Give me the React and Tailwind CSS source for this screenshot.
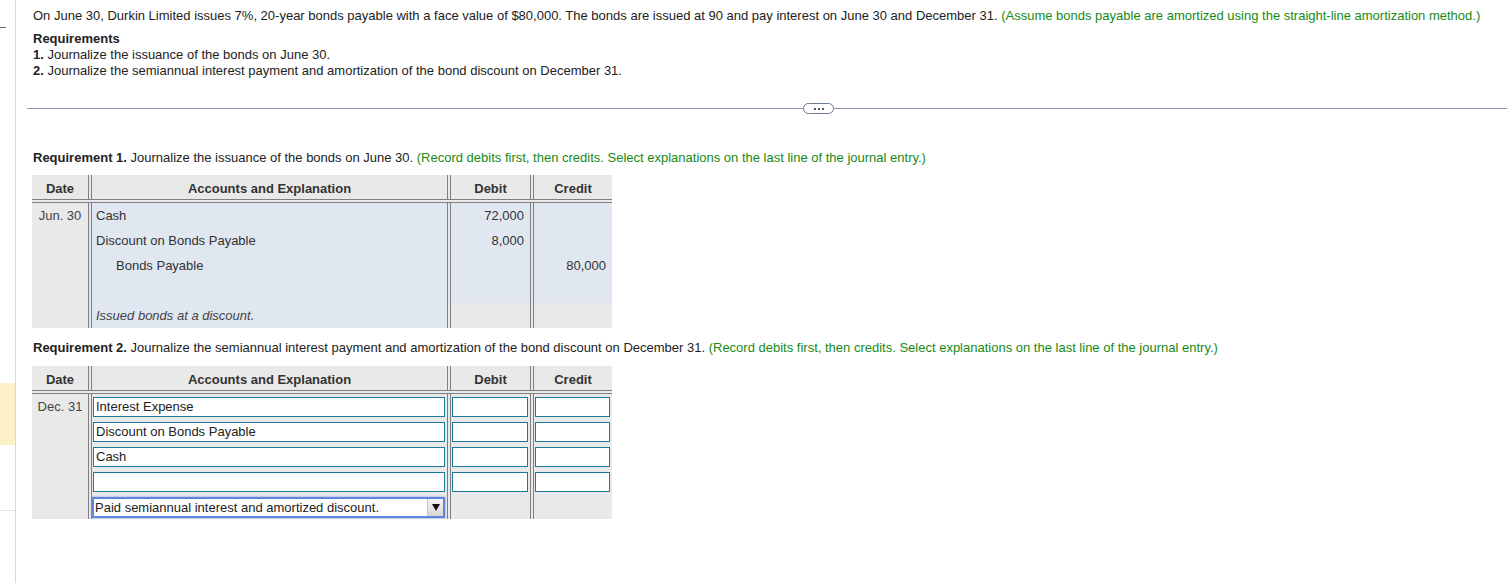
import React from 'react';

const COLS = 'grid grid-cols-[56px_359px_83px_82px]';
const SEP = 'border-l-4 border-double border-[#808080]';

const HeaderRow = () => (
    <div className={`${COLS} h-[28px] bg-[#e9e9e9] border-b-4 border-double border-[#808080] font-bold text-[#333]`}>
        <div className="flex items-center justify-center pt-[3px]">Date</div>
        <div className={`${SEP} flex items-center justify-center pt-[4px]`}>Accounts and Explanation</div>
        <div className={`${SEP} flex items-center justify-center pt-[4px]`}>Debit</div>
        <div className={`${SEP} flex items-center justify-center pt-[4px]`}>Credit</div>
    </div>
);

// static journal row, requirement 1
const EntryRow = ({ date, account, debit, credit, indent, last, italic }) => (
    <div className={`${COLS} h-[25px]`}>
        <div className="flex items-center justify-center bg-[#e9e9e9] text-[#444]">{date}</div>
        <div className={`${SEP} flex items-center bg-[#e0e7f1] text-[#333] ${indent ? 'pl-[24px]' : 'pl-[4px]'} ${italic ? 'italic text-[#444]' : ''}`}>
            {account}
        </div>
        <div className={`${SEP} flex items-center justify-end pr-[6px] text-[#333] ${last ? 'bg-[#e9e9e9]' : 'bg-[#e0e7f1]'}`}>{debit}</div>
        <div className={`${SEP} flex items-center justify-end pr-[6px] text-[#333] ${last ? 'bg-[#e9e9e9]' : 'bg-[#e0e7f1]'}`}>{credit}</div>
    </div>
);

const Box = ({ value, className = '' }) => (
    <div className={`h-[20px] bg-white border border-[#1a7b99] flex items-center pl-[2px] text-[#222] ${className}`}>{value}</div>
);

// input row, requirement 2
const InputRow = ({ date, account }) => (
    <div className={`${COLS} h-[25px] bg-[#e9e9e9]`}>
        <div className="flex items-center justify-center text-[#444]">{date}</div>
        <div className={`${SEP} flex items-center pl-[1px] pr-[2px]`}>
            <Box value={account} className="w-full" />
        </div>
        <div className={`${SEP} flex items-center pl-[1px] pr-[2px]`}>
            <Box className="w-full" />
        </div>
        <div className={`${SEP} flex items-center pl-[1px] pr-[2px]`}>
            <Box className="w-full" />
        </div>
    </div>
);

const SelectRow = () => (
    <div className={`${COLS} h-[25px] bg-[#e9e9e9]`}>
        <div />
        <div className={`${SEP} flex items-start pt-[3px] pr-[2px]`}>
            <div className="flex h-[21px] w-full items-center border-2 border-[#5f86dc] bg-white shadow-[0_0_2px_#7d9ee6]">
                <span className="flex-1 pl-[1px] text-[#222]">Paid semiannual interest and amortized discount.</span>
                <span className="flex h-full w-[16px] items-center justify-center border-l border-[#c8c8c8] bg-gradient-to-b from-[#f6f6f6] to-[#d6d6d6]">
                    <svg width="8" height="7" viewBox="0 0 8 7">
                        <path d="M0 0H8L4 7Z" fill="#111" />
                    </svg>
                </span>
            </div>
        </div>
        <div className={SEP} />
        <div className={SEP} />
    </div>
);

export default function App() {
    return (
        <div className="flex min-h-[583px] bg-white font-['Liberation_Sans',Arial,sans-serif] text-[13px] text-[#222]">
            {/* left rail */}
            <div className="flex w-[16px] shrink-0 flex-col border-r border-[#d3d7de]">
                <div className="mt-[27px] h-px w-[6px] bg-[#666]" />
                <div className="mt-[355px] h-[62px] w-[15px] bg-[#fbf0c7]" />
                <div className="mt-[65px] h-px w-[15px] bg-[#e2e2e2]" />
            </div>

            <div className="flex-1 pl-[17px] pt-[8px]">
                <p className="leading-[16px]">
                    On June 30, Durkin Limited issues 7%, 20-year bonds payable with a face value of $80,000. The bonds are issued at 90 and pay interest on June 30 and December 31.{' '}
                    <span className="text-[#178a17]">(Assume bonds payable are amortized using the straight-line amortization method.)</span>
                </p>
                <div className="mt-[7px] leading-[16px]">
                    <p className="font-bold">Requirements</p>
                    <p><span className="font-bold">1.</span> Journalize the issuance of the bonds on June 30.</p>
                    <p><span className="font-bold">2.</span> Journalize the semiannual interest payment and amortization of the bond discount on December 31.</p>
                </div>

                <div className="relative -ml-[6px] mt-[29px] h-px bg-[#8c96a8]">
                    <div className="absolute left-[776px] -top-[5px] flex h-[11px] w-[31px] items-center justify-center gap-[2px] rounded-full border border-[#6b7a90] bg-white">
                        <span className="h-[2px] w-[2px] bg-[#4a5568]" />
                        <span className="h-[2px] w-[2px] bg-[#4a5568]" />
                        <span className="h-[2px] w-[2px] bg-[#4a5568]" />
                    </div>
                </div>

                <p className="mt-[41px] leading-[16px]">
                    <span className="font-bold">Requirement 1.</span> Journalize the issuance of the bonds on June 30.{' '}
                    <span className="text-[#178a17]">(Record debits first, then credits. Select explanations on the last line of the journal entry.)</span>
                </p>
                <div className="-ml-[1px] mt-[9px] w-[580px]">
                    <HeaderRow />
                    <EntryRow date="Jun. 30" account="Cash" debit="72,000" />
                    <EntryRow account="Discount on Bonds Payable" debit="8,000" />
                    <EntryRow account="Bonds Payable" indent credit="80,000" />
                    <EntryRow />
                    <EntryRow account="Issued bonds at a discount." italic last />
                </div>

                <p className="mt-[12px] leading-[16px]">
                    <span className="font-bold">Requirement 2.</span> Journalize the semiannual interest payment and amortization of the bond discount on December 31.{' '}
                    <span className="text-[#178a17]">(Record debits first, then credits. Select explanations on the last line of the journal entry.)</span>
                </p>
                <div className="-ml-[1px] mt-[10px] w-[580px]">
                    <HeaderRow />
                    <InputRow date="Dec. 31" account="Interest Expense" />
                    <InputRow account="Discount on Bonds Payable" />
                    <InputRow account="Cash" />
                    <InputRow />
                    <SelectRow />
                </div>
            </div>
        </div>
    );
}
